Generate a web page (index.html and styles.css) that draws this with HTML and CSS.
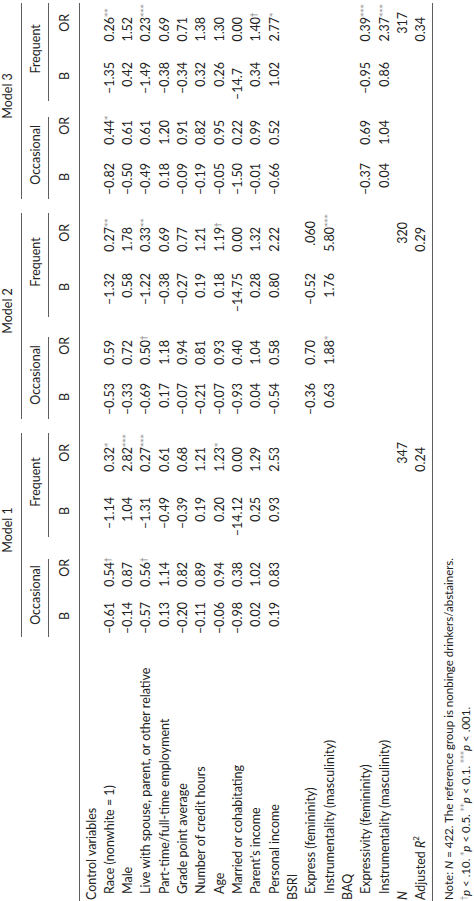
FILE: index.html
```html
<!DOCTYPE html>
<html lang="en">
<head>
<meta charset="utf-8">
<title>Table</title>
<link rel="stylesheet" href="styles.css">
</head>
<body>
<div class="page">
  <div class="sheet">
    <table class="tbl">
      <colgroup>
        <col class="w-lab">
        <col class="w38"><col class="w40"><col class="w22"><col class="w43"><col class="w61"><col class="w14">
        <col class="w39"><col class="w43"><col class="w20"><col class="w47"><col class="w57"><col class="w14">
        <col class="w39"><col class="w43"><col class="w16"><col class="w42"><col class="w56">
      </colgroup>
      <thead>
        <tr class="r-model">
          <th class="lab"></th>
          <th class="model" colspan="5">Model 1</th><th></th>
          <th class="model" colspan="5">Model 2</th><th></th>
          <th class="model" colspan="5">Model 3</th>
        </tr>
        <tr class="r-grp">
          <th class="lab"></th>
          <th class="grp" colspan="2">Occasional</th><th></th><th class="grp" colspan="2">Frequent</th><th></th>
          <th class="grp" colspan="2">Occasional</th><th></th><th class="grp" colspan="2">Frequent</th><th></th>
          <th class="grp" colspan="2">Occasional</th><th></th><th class="grp" colspan="2">Frequent</th>
        </tr>
        <tr class="r-stat">
          <th class="lab"></th>
          <th class="b">B</th><th class="or">OR</th><th></th><th class="b">B</th><th class="or orf">OR</th><th></th>
          <th class="b">B</th><th class="or">OR</th><th></th><th class="b">B</th><th class="or orf">OR</th><th></th>
          <th class="b">B</th><th class="or">OR</th><th></th><th class="b">B</th><th class="or orf">OR</th>
        </tr>
      </thead>
      <tbody>
        <tr class="first">
          <td class="lab">Control variables</td>
          <td></td><td></td><td></td><td></td><td></td><td></td>
          <td></td><td></td><td></td><td></td><td></td><td></td>
          <td></td><td></td><td></td><td></td><td></td>
        </tr>
        <tr>
          <td class="lab in">Race (nonwhite = 1)</td>
          <td class="n">–0.61</td><td class="n">0.54<span class="s">†</span></td><td></td><td class="n">–1.14</td><td class="n f">0.32<span class="s">*</span></td><td></td>
          <td class="n">–0.53</td><td class="n">0.59</td><td></td><td class="n">–1.32</td><td class="n f">0.27<span class="s">**</span></td><td></td>
          <td class="n">–0.82</td><td class="n">0.44<span class="s">*</span></td><td></td><td class="n">–1.35</td><td class="n f">0.26<span class="s">**</span></td>
        </tr>
        <tr>
          <td class="lab in">Male</td>
          <td class="n">–0.14</td><td class="n">0.87</td><td></td><td class="n">1.04</td><td class="n f">2.82<span class="s">***</span></td><td></td>
          <td class="n">–0.33</td><td class="n">0.72</td><td></td><td class="n">0.58</td><td class="n f">1.78</td><td></td>
          <td class="n">–0.50</td><td class="n">0.61</td><td></td><td class="n">0.42</td><td class="n f">1.52</td>
        </tr>
        <tr>
          <td class="lab in">Live with spouse, parent, or other relative</td>
          <td class="n">–0.57</td><td class="n">0.56<span class="s">†</span></td><td></td><td class="n">–1.31</td><td class="n f">0.27<span class="s">***</span></td><td></td>
          <td class="n">–0.69</td><td class="n">0.50<span class="s">†</span></td><td></td><td class="n">–1.22</td><td class="n f">0.33<span class="s">**</span></td><td></td>
          <td class="n">–0.49</td><td class="n">0.61</td><td></td><td class="n">–1.49</td><td class="n f">0.23<span class="s">***</span></td>
        </tr>
        <tr>
          <td class="lab in">Part-time/full-time employment</td>
          <td class="n">0.13</td><td class="n">1.14</td><td></td><td class="n">–0.49</td><td class="n f">0.61</td><td></td>
          <td class="n">0.17</td><td class="n">1.18</td><td></td><td class="n">–0.38</td><td class="n f">0.69</td><td></td>
          <td class="n">0.18</td><td class="n">1.20</td><td></td><td class="n">–0.38</td><td class="n f">0.69</td>
        </tr>
        <tr>
          <td class="lab in">Grade point average</td>
          <td class="n">–0.20</td><td class="n">0.82</td><td></td><td class="n">–0.39</td><td class="n f">0.68</td><td></td>
          <td class="n">–0.07</td><td class="n">0.94</td><td></td><td class="n">–0.27</td><td class="n f">0.77</td><td></td>
          <td class="n">–0.09</td><td class="n">0.91</td><td></td><td class="n">–0.34</td><td class="n f">0.71</td>
        </tr>
        <tr>
          <td class="lab in">Number of credit hours</td>
          <td class="n">–0.11</td><td class="n">0.89</td><td></td><td class="n">0.19</td><td class="n f">1.21</td><td></td>
          <td class="n">–0.21</td><td class="n">0.81</td><td></td><td class="n">0.19</td><td class="n f">1.21</td><td></td>
          <td class="n">–0.19</td><td class="n">0.82</td><td></td><td class="n">0.32</td><td class="n f">1.38</td>
        </tr>
        <tr>
          <td class="lab in">Age</td>
          <td class="n">–0.06</td><td class="n">0.94</td><td></td><td class="n">0.20</td><td class="n f">1.23<span class="s">*</span></td><td></td>
          <td class="n">–0.07</td><td class="n">0.93</td><td></td><td class="n">0.18</td><td class="n f">1.19<span class="s">†</span></td><td></td>
          <td class="n">–0.05</td><td class="n">0.95</td><td></td><td class="n">0.26</td><td class="n f">1.30</td>
        </tr>
        <tr>
          <td class="lab in">Married or cohabitating</td>
          <td class="n">–0.98</td><td class="n">0.38</td><td></td><td class="n">–14.12</td><td class="n f">0.00</td><td></td>
          <td class="n">–0.93</td><td class="n">0.40</td><td></td><td class="n">–14.75</td><td class="n f">0.00</td><td></td>
          <td class="n">–1.50</td><td class="n">0.22</td><td></td><td class="n"><span class="short">–14.7</span></td><td class="n f">0.00</td>
        </tr>
        <tr>
          <td class="lab in">Parent’s income</td>
          <td class="n">0.02</td><td class="n">1.02</td><td></td><td class="n">0.25</td><td class="n f">1.29</td><td></td>
          <td class="n">0.04</td><td class="n">1.04</td><td></td><td class="n">0.28</td><td class="n f">1.32</td><td></td>
          <td class="n">–0.01</td><td class="n">0.99</td><td></td><td class="n">0.34</td><td class="n f">1.40<span class="s">†</span></td>
        </tr>
        <tr>
          <td class="lab in">Personal income</td>
          <td class="n">0.19</td><td class="n">0.83</td><td></td><td class="n">0.93</td><td class="n f">2.53</td><td></td>
          <td class="n">–0.54</td><td class="n">0.58</td><td></td><td class="n">0.80</td><td class="n f">2.22</td><td></td>
          <td class="n">–0.66</td><td class="n">0.52</td><td></td><td class="n">1.02</td><td class="n f">2.77<span class="s">*</span></td>
        </tr>
        <tr>
          <td class="lab">BSRI</td>
          <td></td><td></td><td></td><td></td><td></td><td></td>
          <td></td><td></td><td></td><td></td><td></td><td></td>
          <td></td><td></td><td></td><td></td><td></td>
        </tr>
        <tr>
          <td class="lab in">Express (femininity)</td>
          <td></td><td></td><td></td><td></td><td></td><td></td>
          <td class="n">–0.36</td><td class="n">0.70</td><td></td><td class="n">–0.52</td><td class="n f"><span class="long">.060</span></td><td></td>
          <td></td><td></td><td></td><td></td><td></td>
        </tr>
        <tr>
          <td class="lab in">Instrumentality (masculinity)</td>
          <td></td><td></td><td></td><td></td><td></td><td></td>
          <td class="n">0.63</td><td class="n">1.88<span class="s">*</span></td><td></td><td class="n">1.76</td><td class="n f">5.80<span class="s">***</span></td><td></td>
          <td></td><td></td><td></td><td></td><td></td>
        </tr>
        <tr>
          <td class="lab">BAQ</td>
          <td></td><td></td><td></td><td></td><td></td><td></td>
          <td></td><td></td><td></td><td></td><td></td><td></td>
          <td></td><td></td><td></td><td></td><td></td>
        </tr>
        <tr>
          <td class="lab in">Expressivity (femininity)</td>
          <td></td><td></td><td></td><td></td><td></td><td></td>
          <td></td><td></td><td></td><td></td><td></td><td></td>
          <td class="n">–0.37</td><td class="n">0.69</td><td></td><td class="n">–0.95</td><td class="n f">0.39<span class="s">***</span></td>
        </tr>
        <tr>
          <td class="lab in">Instrumentality (masculinity)</td>
          <td></td><td></td><td></td><td></td><td></td><td></td>
          <td></td><td></td><td></td><td></td><td></td><td></td>
          <td class="n">0.04</td><td class="n">1.04</td><td></td><td class="n">0.86</td><td class="n f">2.37<span class="s">***</span></td>
        </tr>
        <tr>
          <td class="lab"><i>N</i></td>
          <td></td><td></td><td></td><td></td><td class="n f"><span class="int">347</span></td><td></td>
          <td></td><td></td><td></td><td></td><td class="n f"><span class="int">320</span></td><td></td>
          <td></td><td></td><td></td><td></td><td class="n f"><span class="int">317</span></td>
        </tr>
        <tr class="last">
          <td class="lab">Adjusted <i>R</i><sup class="sq">2</sup></td>
          <td></td><td></td><td></td><td></td><td class="n f">0.24</td><td></td>
          <td></td><td></td><td></td><td></td><td class="n f">0.29</td><td></td>
          <td></td><td></td><td></td><td></td><td class="n f">0.34</td>
        </tr>
      </tbody>
    </table>
    <div class="note">
      <p>Note: <i>N</i> = 422. The reference group is nonbinge drinkers/abstainers.</p>
      <p><span class="ns">†</span><i>p</i> &lt; .10. <span class="ns">*</span><i>p</i> &lt; 0.5. <span class="ns">**</span><i>p</i> &lt; 0.1. <span class="ns">***</span><i>p</i> &lt; .001.</p>
    </div>
  </div>
</div>
</body>
</html>
```

FILE: styles.css
```css
html, body {
  margin: 0;
  padding: 0;
  width: 474px;
  height: 901px;
  overflow: hidden;
  background: #ffffff;
}

.page {
  width: 474px;
  height: 901px;
  overflow: hidden;
}

.sheet {
  width: 901px;
  height: 474px;
  background: #ffffff;
  color: #222222;
  font-family: Lato, "Open Sans", sans-serif;
  font-size: 12.5px;
  transform-origin: 0 0;
  transform: translateY(901px) rotate(-90deg);
}

.tbl {
  width: 898px;
  table-layout: fixed;
  border-collapse: separate;
  border-spacing: 0;
}

.w-lab { width: 264px; }
.w14 { width: 14px; }
.w16 { width: 16px; }
.w20 { width: 20px; }
.w22 { width: 22px; }
.w38 { width: 38px; }
.w39 { width: 39px; }
.w40 { width: 40px; }
.w42 { width: 42px; }
.w43 { width: 43px; }
.w47 { width: 47px; }
.w56 { width: 56px; }
.w57 { width: 57px; }
.w61 { width: 61px; }

.tbl th {
  font-weight: normal;
  line-height: 16px;
  padding: 0;
  white-space: nowrap;
  vertical-align: top;
}

.r-model th {
  padding: 0 0 5px;
}

.r-model th.model {
  border-bottom: 1px solid #5e5e5e;
  text-align: center;
  padding-left: 10px;
}

.r-grp th {
  padding: 6px 0 4px;
}

.r-grp th.grp {
  border-bottom: 1px solid #5e5e5e;
  text-align: center;
  padding-left: 6px;
}

.r-stat th {
  padding: 8px 0 6px;
  border-bottom: 1px solid #5e5e5e;
}

.r-stat th.b {
  text-align: right;
  padding-right: 13px;
}

.r-stat th.or {
  text-align: right;
  padding-right: 0;
}

.r-stat th.orf {
  padding-right: 11px;
}

.tbl td {
  padding: 0;
  line-height: 18.33px;
  white-space: nowrap;
  vertical-align: top;
}

.tbl tr.first td {
  padding-top: 2.5px;
}

.tbl tr.last td {
  padding-bottom: 1px;
  border-bottom: 1px solid #5e5e5e;
}

.tbl td.lab {
  text-align: left;
  padding-left: 1px;
}

.tbl td.lab.in {
  padding-left: 7px;
}

.tbl td.n {
  text-align: right;
  padding-right: 3px;
}

.tbl td.n.f {
  padding-right: 14px;
}

.s {
  display: inline-block;
  width: 0;
  line-height: 0;
  font-family: "DejaVu Sans", sans-serif;
  font-size: 8.5px;
  color: #8c8c8c;
  vertical-align: 3px;
  white-space: nowrap;
}

.short {
  padding-right: 6px;
}

.long {
  margin-right: -6px;
}

.int {
  margin-right: -5px;
}

.sq {
  font-size: 8px;
  line-height: 0;
  vertical-align: 6px;
}

.note {
  margin-top: 7px;
  font-size: 11.5px;
  line-height: 17px;
  color: #222222;
}

.note p {
  margin: 0;
  padding-left: 1px;
}

.ns {
  font-family: "DejaVu Sans", sans-serif;
  font-size: 8px;
  color: #8c8c8c;
  vertical-align: 3px;
  line-height: 0;
}
```
